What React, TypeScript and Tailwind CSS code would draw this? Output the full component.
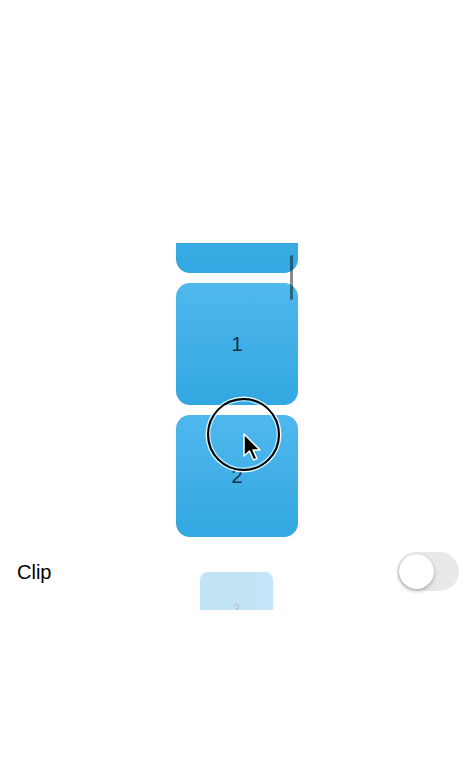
import React from 'react';

const Card: React.FC<{ label: string }> = ({ label }) => (
  <div className="h-[122px] w-full shrink-0 rounded-[14px] bg-gradient-to-b from-[#4fb8ee] to-[#32a7e1] flex items-center justify-center">
    <span className="text-[20px] text-[#163047]">{label}</span>
  </div>
);

const Toggle: React.FC = () => (
  <div className="w-[62px] h-[39px] rounded-full bg-[#e9e9eb] p-[2px] flex items-center">
    <div className="w-[35px] h-[35px] rounded-full bg-white shadow-[0_2px_4px_rgba(0,0,0,0.25),0_0_1px_rgba(0,0,0,0.2)]" />
  </div>
);

export default function App() {
  return (
    <div
      className="relative w-[474px] h-[776px] bg-white overflow-hidden"
      style={{ fontFamily: '"Liberation Sans", Arial, sans-serif' }}
    >
      <div className="h-[243px]" />

      {/* scroll list */}
      <div className="relative mx-auto w-[122px] h-[294px] overflow-hidden">
        <div className="flex flex-col gap-[10px] mt-[-92px]">
          <Card label="0" />
          <Card label="1" />
          <Card label="2" />
        </div>
        <div className="absolute right-[5px] top-[12px] w-[3px] h-[45px] rounded-full bg-black/45" />
      </div>

      {/* clip row */}
      <div className="flex items-center justify-between pl-[17px] pr-[15px] mt-[15px]">
        <span className="text-[20px] text-black">Clip</span>
        <Toggle />
      </div>

      {/* dragged ghost */}
      <div className="absolute left-[200px] top-[572px] w-[73px] h-[38px] overflow-hidden">
        <div className="w-[73px] h-[73px] rounded-[8px] bg-[#37aae3] opacity-30 flex items-center justify-center">
          <span className="text-[12px] text-[#163047]">3</span>
        </div>
      </div>

      {/* touch indicator */}
      <div className="absolute left-[207px] top-[398px] w-[73px] h-[73px] rounded-full border-2 border-black shadow-[0_0_0_1.5px_rgba(255,255,255,0.9),inset_0_0_0_1.5px_rgba(255,255,255,0.6)]" />
      <svg className="absolute left-[241px] top-[432px]" width="22" height="32" viewBox="0 0 22 32">
        <path
          d="M3 2 L3 24 L8.5 19 L12.5 28 L16 26.5 L12 18 L19 18 Z"
          fill="#000"
          stroke="#fff"
          strokeWidth="1.5"
          strokeLinejoin="round"
        />
      </svg>
    </div>
  );
}
